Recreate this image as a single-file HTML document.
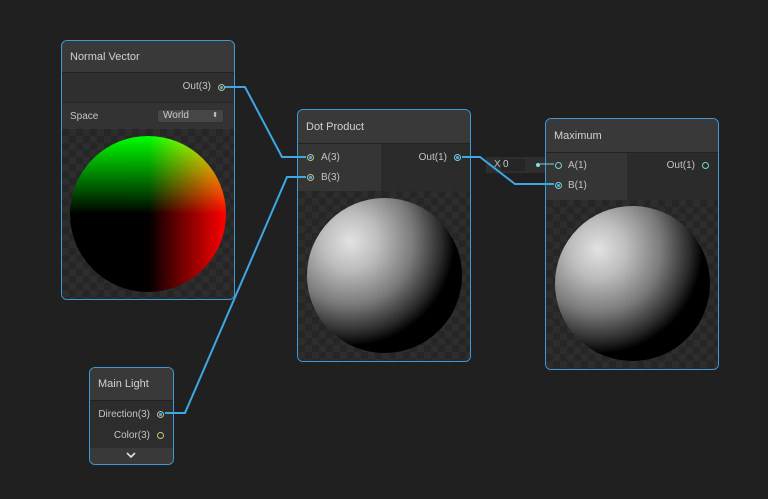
<!DOCTYPE html>
<html><head><style>
*{margin:0;padding:0;box-sizing:border-box}
body{width:768px;height:499px;background:#202020;position:relative;overflow:hidden;font-family:"Liberation Sans",sans-serif;font-size:10px;color:#c4c4c4}
.node{position:absolute;border:1.5px solid #3c9bd4;border-radius:6px;background:#2d2d2d;overflow:hidden}
.hdr{position:absolute;left:0;right:0;top:0;background:#393939;color:#d2d2d2;font-size:11px;padding-left:8px;border-bottom:1px solid #222}
.row{position:absolute;left:0;right:0;background:#2f2f2f}
.chk{position:absolute;left:0;right:0;bottom:0;background-color:#262626;background-image:linear-gradient(45deg,#2d2d2d 25%,transparent 25%,transparent 75%,#2d2d2d 75%),linear-gradient(45deg,#2d2d2d 25%,transparent 25%,transparent 75%,#2d2d2d 75%);background-size:14px 14px;background-position:0 0,7px 7px}
.t{position:absolute;white-space:nowrap}
.port{position:absolute;width:7px;height:7px;border-radius:50%;border:1.3px solid #c9c37a}
.port.f::after{content:"";position:absolute;left:1px;top:1px;width:2.5px;height:2.5px;border-radius:50%;background:#3ab0f0}
.port.c{border-color:#7fcfd0}
.sph{position:absolute;border-radius:50%}
.grey{background:radial-gradient(circle at 28% 28%,#e2e2e2 0%,#bdbdbd 18%,#7a7a7a 40%,#2a2a2a 58%,#000 66%)}
</style></head><body>

<!-- Normal Vector -->
<div class="node" style="left:61px;top:40px;width:174px;height:260px">
 <div class="hdr" style="height:32px;line-height:32px">Normal Vector</div>
 <div class="row" style="top:32px;height:29px"><span class="t" style="right:23px;top:8px">Out(3)</span><div class="port f" style="right:9px;top:11px"></div></div>
 <div class="row" style="top:61px;height:27px;background:#333;border-top:1px solid #262626">
  <span class="t" style="left:8px;top:8px">Space</span>
  <div style="position:absolute;left:95px;top:6px;width:67px;height:14px;background:#464646;border-radius:3px;border:1px solid #303030;color:#ccc;padding-left:5px;line-height:12px">World<span style="position:absolute;right:5px;font-size:7px">⬍</span></div>
 </div>
 <div class="chk" style="top:88px"></div>
 <div class="sph" style="left:8px;top:95px;width:156px;height:156px;background:linear-gradient(to bottom,#00ff00 0%,rgba(0,160,0,.5) 35%,rgba(0,0,0,0) 50%),linear-gradient(to left,#ff0000 0%,rgba(160,0,0,.5) 35%,rgba(0,0,0,0) 50%),#000;background-blend-mode:screen"></div>
</div>

<!-- Dot Product -->
<div class="node" style="left:297px;top:109px;width:174px;height:253px">
 <div class="hdr" style="height:34px;line-height:34px">Dot Product</div>
 <div class="row" style="top:34px;height:47px;background:#2b2b2b"></div>
 <div class="row" style="top:34px;height:47px;width:83px;background:#353535"></div>
 <span class="t" style="left:23px;top:42px">A(3)</span><div class="port f" style="left:9px;top:44px"></div>
 <span class="t" style="left:23px;top:62px">B(3)</span><div class="port f" style="left:9px;top:64px"></div>
 <span class="t" style="right:23px;top:42px">Out(1)</span><div class="port f c" style="right:9px;top:44px"></div>
 <div class="chk" style="top:81px"></div>
 <div class="sph grey" style="left:9px;top:88px;width:155px;height:155px"></div>
</div>

<!-- inline input -->
<div style="position:absolute;left:486px;top:157px;width:62px;height:16px;background:#2e2e2e">
 <span class="t" style="left:8px;top:2px;color:#bbb">X</span>
 <div style="position:absolute;left:15px;top:2px;width:24px;height:12px;background:#262626;color:#ccc;padding-left:2px;line-height:12px">0</div>
 <div style="position:absolute;left:50px;top:6px;width:4px;height:4px;border-radius:50%;background:#7fdfe8"></div>
</div>

<!-- Maximum -->
<div class="node" style="left:545px;top:118px;width:174px;height:252px">
 <div class="hdr" style="height:34px;line-height:34px">Maximum</div>
 <div class="row" style="top:34px;height:47px;background:#2b2b2b"></div>
 <div class="row" style="top:34px;height:47px;width:81px;background:#353535"></div>
 <span class="t" style="left:22px;top:41px">A(1)</span><div class="port c" style="left:9px;top:43px"></div>
 <span class="t" style="left:22px;top:61px">B(1)</span><div class="port f c" style="left:9px;top:63px"></div>
 <span class="t" style="right:23px;top:41px">Out(1)</span><div class="port c" style="right:9px;top:43px"></div>
 <div class="chk" style="top:81px"></div>
 <div class="sph grey" style="left:9px;top:87px;width:155px;height:155px"></div>
</div>

<!-- Main Light -->
<div class="node" style="left:89px;top:367px;width:85px;height:98px">
 <div class="hdr" style="height:33px;line-height:33px">Main Light</div>
 <div class="row" style="top:33px;height:55px;background:#2d2d2d"></div>
 <span class="t" style="right:23px;top:41px">Direction(3)</span><div class="port f" style="right:9px;top:43px"></div>
 <span class="t" style="right:23px;top:62px">Color(3)</span><div class="port" style="right:9px;top:64px"></div>
 <div class="row" style="top:80px;height:16px;background:#393939"><svg width="85" height="16" style="position:absolute;left:0;top:0"><path d="M37 5 L41 9 L45 5" fill="none" stroke="#e0e0e0" stroke-width="1.6"/></svg></div>
</div>

<svg width="768" height="499" style="position:absolute;left:0;top:0">
<g fill="none" stroke="#3ea7e4" stroke-width="2">
<path d="M225 87 H245 L282 157 H306"/>
<path d="M165 413 H185 L287 177 H306"/>
<path d="M462 157 H480 L515 184 H554"/>
<path d="M539 164 H554" stroke="#7fcfd0" stroke-width="1"/>
</g></svg>

</body></html>
